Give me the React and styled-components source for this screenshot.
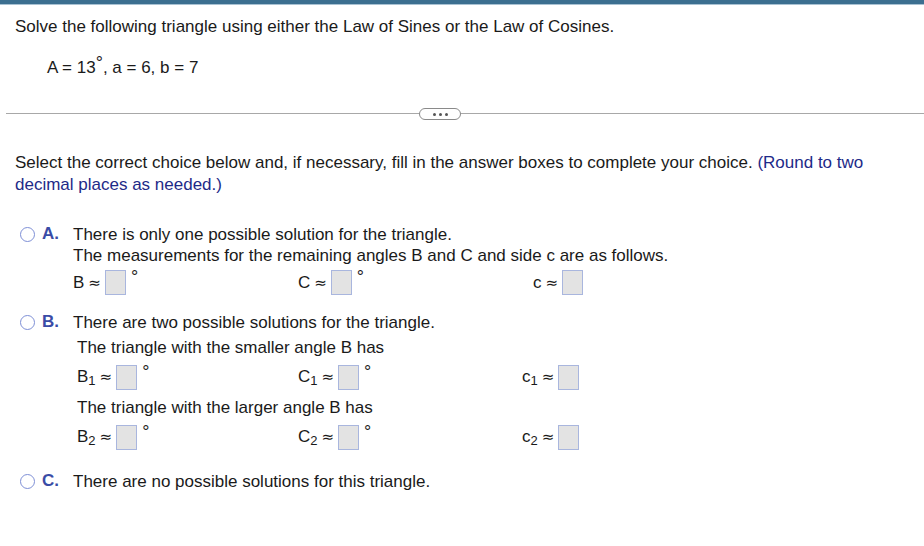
import React from 'react';
import styled, { createGlobalStyle } from 'styled-components';

const Global = createGlobalStyle`
  body {
    margin: 0;
    background: #fff;
    font-family: "Liberation Sans", Arial, sans-serif;
    font-size: 17px;
    color: #1a1a1a;
  }
`;

const Page = styled.div`
  width: 924px;
  height: 546px;
  overflow: hidden;
`;

const TopBar = styled.div`
  height: 4px;
  background: #3c6f90;
  border-bottom: 1px solid #a9c2d3;
`;

const Question = styled.div`
  padding: 12px 0 0 15px;
`;

const Line = styled.div`
  line-height: 20px;
  padding-left: ${(p) => p.indent || 0}px;
  margin-top: ${(p) => p.top || 0}px;
`;

const DegSup = styled.span`
  font-size: 18px;
  position: relative;
  top: -4px;
`;

const Divider = styled.div`
  margin: 30px 0 0 6px;
  height: 12px;
  display: flex;
  align-items: center;
  justify-content: center;
  position: relative;
  &::before {
    content: '';
    position: absolute;
    left: 0;
    right: 0;
    top: 5px;
    height: 1px;
    background: #a8a8a8;
  }
`;

const Pill = styled.div`
  position: relative;
  margin-left: -50px;
  width: 40px;
  height: 10px;
  border: 1px solid #8a8a8a;
  border-radius: 6px;
  background: #fff;
  display: flex;
  align-items: center;
  justify-content: center;
  gap: 3px;
`;

const Dot = styled.span`
  width: 3px;
  height: 3px;
  border-radius: 50%;
  background: #555;
`;

const Instructions = styled.p`
  margin: 32px 50px 0 15px;
  line-height: 22px;
`;

const Hint = styled.span`
  color: #1e2a88;
`;

const Options = styled.div`
  margin-top: 28px;
`;

const Option = styled.div`
  display: flex;
  align-items: flex-start;
  margin-bottom: ${(p) => p.gap || 0}px;
`;

const Radio = styled.span`
  margin: 3px 0 0 20px;
  width: 13px;
  height: 13px;
  border: 1.5px solid #7e8fd6;
  border-radius: 50%;
  flex-shrink: 0;
`;

const Letter = styled.span`
  width: 31px;
  padding-left: 7px;
  font-weight: bold;
  color: #3a4ca6;
  line-height: 20px;
`;

const Body = styled.div`
  flex: 1;
`;

const Text = styled.div`
  line-height: 21px;
  padding-left: ${(p) => p.indent || 0}px;
  margin-top: ${(p) => p.top || 0}px;
`;

const Row = styled.div`
  display: grid;
  grid-template-columns: ${(p) => p.cols};
  align-items: center;
  height: 25px;
  margin-top: ${(p) => p.top || 0}px;
  padding-left: ${(p) => p.indent || 0}px;
`;

const Cell = styled.div`
  display: flex;
  align-items: center;
  gap: 4px;
`;

const Approx = styled.span`
  font-family: "DejaVu Sans", sans-serif;
  font-size: 15px;
  margin-left: 4px;
`;

const Box = styled.span`
  display: inline-block;
  width: 19px;
  height: 23px;
  background: #e3e3e3;
  border: 1px solid #a9b6de;
  position: relative;
`;

const Deg = styled.span`
  position: absolute;
  left: 25px;
  top: -4px;
  font-size: 18px;
`;

const Sub = styled.sub`
  font-size: 13px;
  vertical-align: -3px;
`;

const Field = ({ name, sub, deg }) => (
  <Cell>
    <span>
      {name}
      {sub && <Sub>{sub}</Sub>}
      <Approx>≈</Approx>
    </span>
    <Box>{deg && <Deg>°</Deg>}</Box>
  </Cell>
);

export default function App() {
  return (
    <Page>
      <Global />
      <TopBar />
      <Question>
        <Line>Solve the following triangle using either the Law of Sines or the Law of Cosines.</Line>
        <Line indent={32} top={20}>
          A = 13<DegSup>°</DegSup>, a = 6, b = 7
        </Line>
      </Question>
      <Divider>
        <Pill>
          <Dot />
          <Dot />
          <Dot />
        </Pill>
      </Divider>
      <Instructions>
        Select the correct choice below and, if necessary, fill in the answer boxes to complete your choice.{' '}
        <Hint>(Round to two decimal places as needed.)</Hint>
      </Instructions>
      <Options>
        <Option gap={17}>
          <Radio />
          <Letter>A.</Letter>
          <Body>
            <Text>There is only one possible solution for the triangle.</Text>
            <Text>The measurements for the remaining angles B and C and side c are as follows.</Text>
            <Row cols="225px 235px 100px" top={4}>
              <Field name="B" deg />
              <Field name="C" deg />
              <Field name="c" />
            </Row>
          </Body>
        </Option>
        <Option gap={21}>
          <Radio />
          <Letter>B.</Letter>
          <Body>
            <Text>There are two possible solutions for the triangle.</Text>
            <Text indent={4} top={4}>The triangle with the smaller angle B has</Text>
            <Row cols="221px 224px 100px" indent={4} top={7}>
              <Field name="B" sub="1" deg />
              <Field name="C" sub="1" deg />
              <Field name="c" sub="1" />
            </Row>
            <Text indent={4} top={7}>The triangle with the larger angle B has</Text>
            <Row cols="221px 224px 100px" indent={4} top={7}>
              <Field name="B" sub="2" deg />
              <Field name="C" sub="2" deg />
              <Field name="c" sub="2" />
            </Row>
          </Body>
        </Option>
        <Option>
          <Radio />
          <Letter>C.</Letter>
          <Body>
            <Text>There are no possible solutions for this triangle.</Text>
          </Body>
        </Option>
      </Options>
    </Page>
  );
}
